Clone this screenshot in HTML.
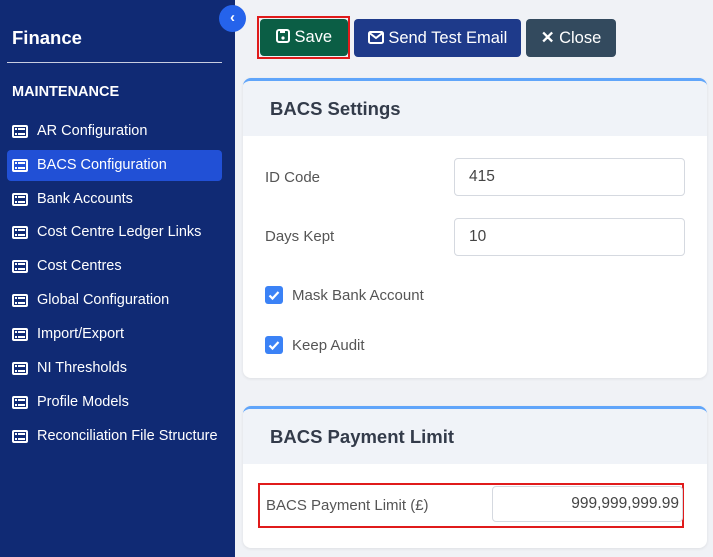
<!DOCTYPE html>
<html><head><style>
*{box-sizing:border-box;margin:0;padding:0}
body{width:713px;height:557px;overflow:hidden;background:#f0f2f6;font-family:"Liberation Sans",sans-serif;position:relative}
.sb{position:absolute;left:0;top:0;width:235px;height:557px;background:#102a74;color:#fff}
.sb h1{position:absolute;left:12px;top:27px;font-size:18.5px;font-weight:bold}
.sb .hr{position:absolute;left:7px;top:62px;width:215px;height:1px;background:#c8cde0}
.sb h2{position:absolute;left:12px;top:84px;font-size:14.5px;font-weight:bold}
.it{position:absolute;left:7px;width:215px;height:31px;border-radius:4px;font-size:14.5px;line-height:31px;padding-left:30px}
.it.a{background:#2150d6}
.ic{position:absolute;left:5px;top:9px;width:16px;height:13px;border:2px solid #fff;border-radius:2px}
.ic:before{content:"";position:absolute;left:1px;top:1px;width:2px;height:7px;border-top:2px solid #fff;border-bottom:2px solid #fff;box-sizing:border-box;}
.ic:after{content:"";position:absolute;left:4px;top:1px;width:7px;height:7px;border-top:2px solid #fff;border-bottom:2px solid #fff;box-sizing:border-box}
.tog{position:absolute;left:219px;top:5px;width:27px;height:27px;border-radius:50%;background:#2563eb;color:#fff;font-size:15px;text-align:center;line-height:26px;font-weight:bold}
.btn{position:absolute;top:19px;height:38px;border-radius:4px;color:#fff;font-size:16.5px;line-height:38px;text-align:center}
.card{position:absolute;left:243px;width:464px;background:#fff;border-radius:8px;border-top:3px solid #60a5fa;box-shadow:0 1px 3px rgba(0,0,0,.08);overflow:hidden}
.ch{background:#f0f3f8;height:55px;padding-left:27px;font-size:18.5px;font-weight:bold;color:#333b4a;line-height:55px}
.lb{position:absolute;font-size:15px;color:#555}
.in{position:absolute;border:1px solid #d5d9e0;border-radius:4px;background:#fff;font-size:15.5px;color:#444;padding-left:14px}
.cb{position:absolute;left:22px;width:18px;height:18px;border-radius:3px;background:#3b82f6}
</style></head><body>
<div class="sb">
<h1>Finance</h1><div class="hr"></div><h2>MAINTENANCE</h2>
<div class="it" style="top:116px"><i class="ic"></i>AR Configuration</div>
<div class="it a" style="top:150px"><i class="ic"></i>BACS Configuration</div>
<div class="it" style="top:184px"><i class="ic"></i>Bank Accounts</div>
<div class="it" style="top:217px"><i class="ic"></i>Cost Centre Ledger Links</div>
<div class="it" style="top:251px"><i class="ic"></i>Cost Centres</div>
<div class="it" style="top:285px"><i class="ic"></i>Global Configuration</div>
<div class="it" style="top:319px"><i class="ic"></i>Import/Export</div>
<div class="it" style="top:353px"><i class="ic"></i>NI Thresholds</div>
<div class="it" style="top:387px"><i class="ic"></i>Profile Models</div>
<div class="it" style="top:421px"><i class="ic"></i>Reconciliation File Structure</div>
</div>
<div class="tog">‹</div>
<div style="position:absolute;left:257px;top:16px;width:93px;height:43px;border:2px solid #e01b1b"></div>
<div class="btn" style="left:260px;width:88px;background:#0b5e45;top:19px;height:37px;line-height:37px"><svg width="14" height="14" viewBox="0 0 14 14" style="vertical-align:-1px"><rect x="1" y="1" width="12" height="12" rx="2" fill="none" stroke="#fff" stroke-width="2"/><rect x="4" y="1" width="5" height="3" fill="#fff"/><circle cx="7" cy="9" r="1.6" fill="#fff"/></svg> Save</div>
<div class="btn" style="left:354px;width:167px;background:#1e3a8a"><svg width="16" height="13" viewBox="0 0 16 13" style="vertical-align:-1px"><rect x="1" y="1" width="14" height="11" rx="1.5" fill="none" stroke="#fff" stroke-width="2"/><path d="M1.5 2 L8 7 L14.5 2" fill="none" stroke="#fff" stroke-width="2"/></svg> Send Test Email</div>
<div class="btn" style="left:526px;width:90px;background:#334a5e"><b>✕</b> Close</div>
<div class="card" style="top:78px;height:300px">
<div class="ch">BACS Settings</div>
<div class="lb" style="left:22px;top:88px">ID Code</div>
<div class="in" style="left:211px;top:77px;width:231px;height:38px;line-height:36px">415</div>
<div class="lb" style="left:22px;top:147px">Days Kept</div>
<div class="in" style="left:211px;top:137px;width:231px;height:38px;line-height:36px">10</div>
<div class="cb" style="top:205px"><svg width="18" height="18"><path d="M4.5 9.5 L7.5 12.5 L13.5 6" fill="none" stroke="#fff" stroke-width="2.2"/></svg></div>
<div class="lb" style="left:49px;top:206px">Mask Bank Account</div>
<div class="cb" style="top:255px"><svg width="18" height="18"><path d="M4.5 9.5 L7.5 12.5 L13.5 6" fill="none" stroke="#fff" stroke-width="2.2"/></svg></div>
<div class="lb" style="left:49px;top:256px">Keep Audit</div>
</div>
<div class="card" style="top:406px;height:142px">
<div class="ch">BACS Payment Limit</div>
<div style="position:absolute;left:15px;top:74px;width:426px;height:45px;border:2px solid #e01b1b"></div>
<div class="lb" style="left:23px;top:88px">BACS Payment Limit (£)</div>
<div class="in" style="left:249px;top:77px;width:191px;height:36px;line-height:34px;text-align:right;padding-right:3px">999,999,999.99</div>
</div>
</body></html>
